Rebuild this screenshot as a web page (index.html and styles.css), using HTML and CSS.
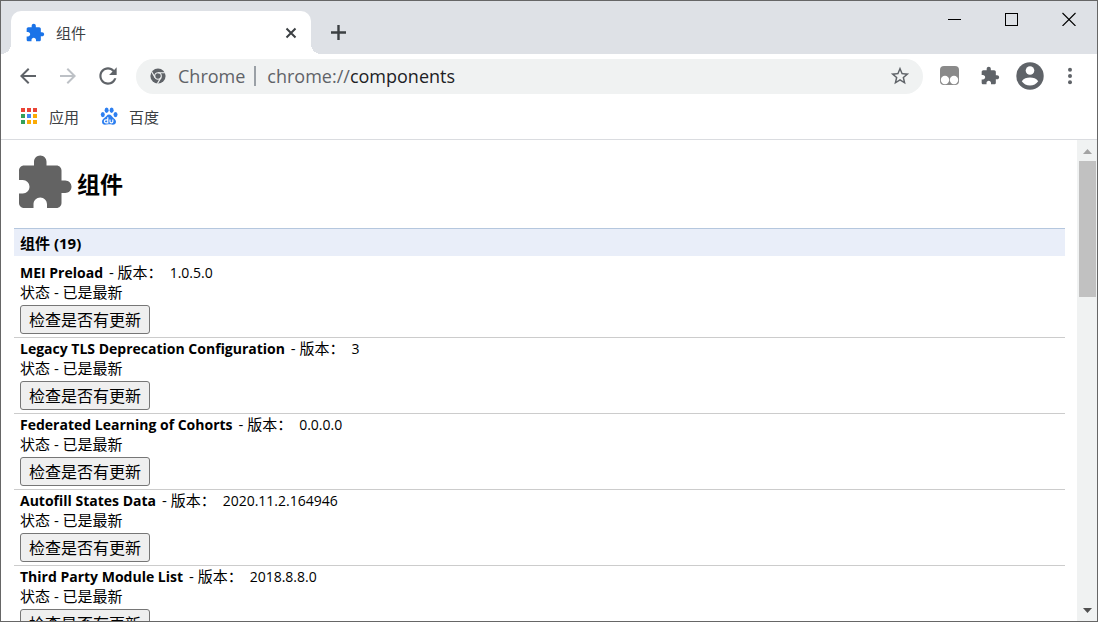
FILE: index.html
```html
<!DOCTYPE html>
<html lang="zh-CN">
<head>
<meta charset="utf-8">
<title>组件</title>
<link rel="stylesheet" href="styles.css">
</head>
<body>
<svg class="defs" aria-hidden="true">
  <symbol id="puzzle" viewBox="0 0 24 24"><path d="M20.5 11H19V7c0-1.1-.9-2-2-2h-4V3.5C13 2.12 11.88 1 10.5 1S8 2.12 8 3.5V5H4c-1.1 0-1.99.9-1.99 2v3.8H3.5c1.49 0 2.7 1.21 2.7 2.7s-1.21 2.7-2.7 2.7H2V20c0 1.1.9 2 2 2h3.8v-1.5c0-1.49 1.21-2.7 2.7-2.7 1.49 0 2.7 1.21 2.7 2.7V22H17c1.1 0 2-.9 2-2v-4h1.5c1.38 0 2.5-1.12 2.5-2.5S21.88 11 20.5 11z"/></symbol>
</svg>
<div class="window">
  <header class="tabstrip">
    <div class="tab">
      <svg class="tab-icon" aria-hidden="true"><use href="#puzzle"/></svg>
      <span class="tab-title">组件</span>
      <button class="icon-button tab-close" aria-label="关闭标签页"><svg width="12" height="12" viewBox="0 0 12 12"><path d="M1.5 1.5l9 9M10.5 1.5l-9 9" stroke="#3c4043" stroke-width="2"/></svg></button>
    </div>
    <button class="icon-button new-tab" aria-label="新标签页"><svg width="16" height="16" viewBox="0 0 16 16"><path d="M7.5 0v15M0 7.5h15" stroke="#3c4043" stroke-width="2.4"/></svg></button>
    <div class="window-controls">
      <button class="icon-button" aria-label="最小化"><svg width="14" height="14" viewBox="0 0 14 14" shape-rendering="crispEdges"><path d="M0 7.5h13" stroke="#000"/></svg></button>
      <button class="icon-button" aria-label="最大化"><svg width="14" height="14" viewBox="0 0 14 14" shape-rendering="crispEdges"><path d="M.5 1.5h12v12H.5z" fill="none" stroke="#000"/></svg></button>
      <button class="icon-button" aria-label="关闭"><svg width="14" height="14" viewBox="0 0 14 14"><path d="M.5 1l13 13M13.5 1l-13 13" stroke="#000" stroke-width="1.1"/></svg></button>
    </div>
  </header>

  <nav class="toolbar" aria-label="工具栏">
    <button class="icon-button tool" aria-label="后退"><svg width="24" height="24" viewBox="0 0 24 24"><path fill="#5f6368" d="M20 11H7.83l5.59-5.59L12 4l-8 8 8 8 1.41-1.41L7.83 13H20v-2z"/></svg></button>
    <button class="icon-button tool" aria-label="前进"><svg width="24" height="24" viewBox="0 0 24 24"><path fill="#bdc1c6" d="M4 13h12.17l-5.59 5.59L12 20l8-8-8-8-1.41 1.41L16.17 11H4v2z"/></svg></button>
    <button class="icon-button tool" aria-label="重新加载"><svg width="26" height="26" viewBox="0 0 24 24"><path fill="#5f6368" d="M17.65 6.35C16.2 4.9 14.21 4 12 4c-4.42 0-7.99 3.58-7.99 8s3.57 8 7.99 8c3.73 0 6.84-2.55 7.73-6h-2.08c-.82 2.33-3.04 4-5.65 4-3.31 0-6-2.69-6-6s2.69-6 6-6c1.66 0 3.14.69 4.22 1.78L13 11h7V4l-2.35 2.35z"/></svg></button>
    <div class="omnibox">
      <svg width="16" height="16" viewBox="0 0 16 16" aria-hidden="true"><circle cx="8" cy="8" r="7.6" fill="#5f6368"/><g fill="none" stroke="#f0f2f2" stroke-width="1.1"><circle cx="8" cy="8" r="3.3"/><path d="M8 4.7h7M5.1 9.6L1.7 3.8M10.9 9.6L7.4 15.6"/></g></svg>
      <span class="origin">Chrome</span>
      <span class="separator"></span>
      <label class="scheme" for="address">chrome://</label><input class="address" id="address" type="text" value="components" spellcheck="false">
      <button class="icon-button" aria-label="为此标签页添加书签"><svg width="22" height="22" viewBox="0 0 24 24"><path fill="#5f6368" d="M22 9.24l-7.19-.62L12 2 9.19 8.63 2 9.24l5.46 4.73L5.82 21 12 17.27 18.18 21l-1.63-7.03L22 9.24zM12 15.4l-3.76 2.27 1-4.28-3.32-2.88 4.38-.38L12 6.1l1.71 4.04 4.38.38-3.32 2.88 1 4.28L12 15.4z"/></svg></button>
    </div>
    <button class="icon-button tool" aria-label="Tampermonkey"><svg width="20" height="20" viewBox="0 0 20 20"><rect width="19" height="19" rx="4" fill="#8a8a8a"/><circle cx="5" cy="14" r="4.2" fill="#fff"/><circle cx="14" cy="14" r="4.2" fill="#fff"/></svg></button>
    <button class="icon-button tool" aria-label="扩展程序"><svg class="extensions-icon"><use href="#puzzle"/></svg></button>
    <button class="icon-button tool" aria-label="用户"><svg width="28" height="28" viewBox="0 0 28 28"><circle cx="14" cy="14" r="13.7" fill="#5f6368"/><circle cx="14" cy="8.5" r="4.3" fill="#fff"/><path d="M5.8 19.2C7.3 16.6 10.9 15.5 14 15.5s6.7 1.1 8.2 3.7C20.4 22 17.4 23.6 14 23.6S7.6 22 5.8 19.2z" fill="#fff"/></svg></button>
    <button class="icon-button tool" aria-label="自定义及控制"><svg width="4" height="18" viewBox="0 0 4 18" fill="#5f6368"><circle cx="2" cy="2.7" r="2"/><circle cx="2" cy="9" r="2"/><circle cx="2" cy="15.3" r="2"/></svg></button>
  </nav>

  <nav class="bookmarks" aria-label="书签栏">
    <a class="bookmark" href="#apps"><svg width="18" height="18" viewBox="0 0 18 18" aria-hidden="true"><path fill="#ea4335" d="M1 1h4v4H1zM7 1h4v4H7zM13 1h4v4h-4z"/><path fill="#34a05a" d="M1 7h4v4H1zM1 13h4v4H1z"/><path fill="#4285f4" d="M7 7h4v4H7z"/><path fill="#fbab05" d="M13 7h4v4h-4zM7 13h4v4H7zM13 13h4v4h-4z"/></svg>应用</a>
    <a class="bookmark" href="#baidu"><svg width="18" height="18" viewBox="0 0 18 18" aria-hidden="true"><g fill="#2d7ff0"><ellipse cx="2.8" cy="7.6" rx="2" ry="2.6"/><ellipse cx="6.6" cy="3.3" rx="2" ry="2.7"/><ellipse cx="11.6" cy="3.3" rx="2" ry="2.7"/><ellipse cx="15.5" cy="7.6" rx="2" ry="2.6"/><path d="M9 7.4c2 0 2.8 1.8 4 3s3 2.3 3 4.4-1.4 2.9-3.2 2.9-2.3-.4-3.8-.4-2.2.4-4 .4S2 16.7 2 14.7s1.6-3.1 2.9-4.2S7 7.4 9 7.4z"/></g><path d="M7.8 10.2v5.6H5.900a1.500 1.500 0 0 1 0-3h1.900M10 12.600v2.200c0 1.300 2.800 1.300 2.800 0v-2.200" fill="none" stroke="#fff" stroke-width="1.2"/></svg>百度</a>
  </nav>

  <div class="viewport">
    <main class="page">
      <div class="page-header">
        <svg class="page-icon" aria-hidden="true"><use href="#puzzle"/></svg>
        <h1>组件</h1>
      </div>
      <h2 class="section-title">组件 (19)</h2>
      <ul class="components">
        <li class="component">
          <p><b>MEI Preload</b> - 版本：<span class="version">1.0.5.0</span></p>
          <p>状态 - 已是最新</p>
          <button class="check">检查是否有更新</button>
        </li>
        <li class="component">
          <p><b>Legacy TLS Deprecation Configuration</b> - 版本：<span class="version">3</span></p>
          <p>状态 - 已是最新</p>
          <button class="check">检查是否有更新</button>
        </li>
        <li class="component">
          <p><b>Federated Learning of Cohorts</b> - 版本：<span class="version">0.0.0.0</span></p>
          <p>状态 - 已是最新</p>
          <button class="check">检查是否有更新</button>
        </li>
        <li class="component">
          <p><b>Autofill States Data</b> - 版本：<span class="version">2020.11.2.164946</span></p>
          <p>状态 - 已是最新</p>
          <button class="check">检查是否有更新</button>
        </li>
        <li class="component">
          <p><b>Third Party Module List</b> - 版本：<span class="version">2018.8.8.0</span></p>
          <p>状态 - 已是最新</p>
          <button class="check">检查是否有更新</button>
        </li>
      </ul>
    </main>
    <div class="scrollbar" aria-hidden="true">
      <svg width="9" height="5" viewBox="0 0 9 5"><path d="M0 5L4.5 0 9 5z" fill="#a3a3a3"/></svg>
      <div class="track"><div class="thumb"></div></div>
      <svg width="9" height="5" viewBox="0 0 9 5"><path d="M0 0h9L4.5 5z" fill="#505050"/></svg>
    </div>
  </div>
</div>
</body>
</html>
```
FILE: styles.css
```css
* {
  box-sizing: border-box;
}

body {
  margin: 0;
  font-family: "Open Sans", "Noto Sans CJK SC", sans-serif;
  font-size: 14px;
  color: #000;
}

h1,
h2,
p,
ul {
  margin: 0;
  padding: 0;
}

svg {
  display: block;
  flex: none;
}

.defs {
  display: none;
}

.window {
  display: flex;
  flex-direction: column;
  height: 100vh;
  border: 1px solid #666;
  background: #fff;
  overflow: hidden;
}

.icon-button {
  display: flex;
  align-items: center;
  justify-content: center;
  flex: none;
  padding: 0;
  border: 0;
  background: none;
}

/* Tab strip */
.tabstrip {
  display: flex;
  align-items: flex-end;
  flex: none;
  height: 53px;
  padding-left: 10px;
  background: #dee1e6;
}

.tab {
  position: relative;
  display: flex;
  align-items: center;
  width: 300px;
  height: 43px;
  padding: 0 14px;
  border-radius: 10px 10px 0 0;
  background: #fff;
}

.tab::before,
.tab::after {
  content: "";
  position: absolute;
  bottom: 0;
  width: 10px;
  height: 10px;
}

.tab::before {
  right: 100%;
  background: radial-gradient(circle at 0 0, transparent 10px, #fff 10px);
}

.tab::after {
  left: 100%;
  background: radial-gradient(circle at 100% 0, transparent 10px, #fff 10px);
}

.tab-icon,
.extensions-icon {
  width: 20px;
  height: 20px;
  fill: #5f6368;
}

.tab-icon {
  fill: #1a73e8;
}

.tab-title {
  flex: 1;
  margin-left: 11px;
  font-size: 15px;
  color: #3c4043;
}

.new-tab {
  width: 32px;
  height: 43px;
  margin-left: 12px;
}

.window-controls {
  display: flex;
  align-self: flex-start;
  margin-left: auto;
}

.window-controls .icon-button {
  width: 57px;
  height: 36px;
}

/* Toolbar */
.toolbar {
  display: flex;
  align-items: center;
  flex: none;
  height: 44px;
  padding: 0 7px;
}

.tool {
  width: 40px;
  height: 36px;
}

.omnibox {
  display: flex;
  align-items: center;
  flex: 1;
  height: 35px;
  margin: 0 7px 0 8px;
  padding: 0 12px 0 14px;
  border-radius: 18px;
  background: #f0f2f2;
  font-size: 18px;
  color: #5f6368;
}

.origin {
  margin-left: 12px;
}

.separator {
  width: 2px;
  height: 20px;
  margin: 0 11px 0 9px;
  background: #9aa0a6;
}

.address {
  flex: 1;
  min-width: 0;
  padding: 0;
  border: 0;
  outline: 0;
  background: none;
  font: inherit;
  color: #202124;
}

/* Bookmarks bar */
.bookmarks {
  display: flex;
  gap: 21px;
  flex: none;
  height: 42px;
  padding: 6px 19px 0;
  border-bottom: 1px solid #dadce0;
}

.bookmark {
  display: flex;
  align-items: center;
  gap: 11px;
  height: 24px;
  font-size: 15px;
  color: #3c4043;
  text-decoration: none;
}

/* Page */
.viewport {
  display: flex;
  flex: 1;
  min-height: 0;
}

.page {
  flex: 1;
  padding: 0 12px 0 13px;
  overflow: hidden;
}

.page-header {
  display: flex;
  align-items: center;
  gap: 3px;
  padding: 13px 0 15px;
}

.page-icon {
  width: 60px;
  height: 60px;
  fill: #636363;
}

h1 {
  font-size: 23px;
}

.section-title {
  padding: 4px 6px 3px;
  border-top: 1px solid #b5c7de;
  background: #e9eef9;
  font-size: 15px;
  font-weight: 700;
  line-height: 20px;
}

.components {
  padding-top: 6px;
  list-style: none;
}

.component {
  padding: 0 6px 3px;
  border-bottom: 1px solid #ccc;
  font-size: 15px;
  line-height: 20px;
}

.component b {
  margin-right: 2px;
  font-size: 14px;
  line-height: 1;
}

.version {
  margin-left: 7px;
  font-size: 14px;
  line-height: 1;
}

.check {
  display: block;
  height: 29px;
  margin-top: 3px;
  padding: 0 8px;
  border: 1px solid #767676;
  border-radius: 3px;
  background: #efefef;
  font-family: inherit;
  font-size: 16px;
  line-height: 20px;
  color: #000;
}

/* Scrollbar */
.scrollbar {
  display: flex;
  flex-direction: column;
  align-items: center;
  gap: 7px;
  flex: none;
  width: 20px;
  padding: 9px 0 8px;
  background: #f0f2f2;
}

.track {
  flex: 1;
  width: 17px;
}

.thumb {
  height: 31%;
  background: #c1c1c1;
}
```
